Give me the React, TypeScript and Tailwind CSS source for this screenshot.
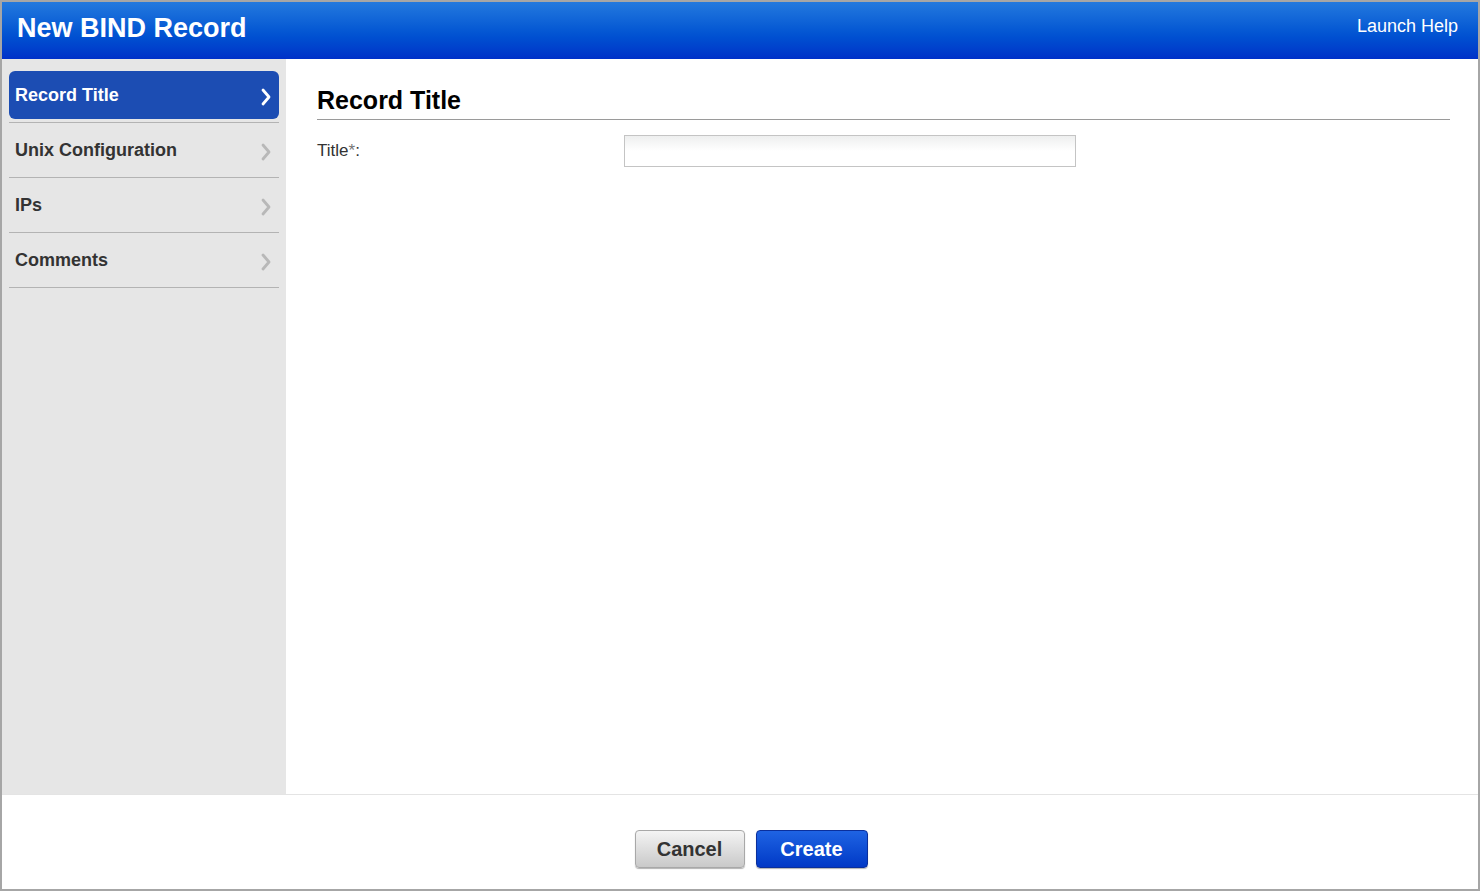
function Chevron({ active }: { active?: boolean }) {
  return (
    <svg width="12" height="20" viewBox="0 0 12 20" className="shrink-0 mt-[3px]">
      <path
        d="M3 3 L9 10 L3 17"
        fill="none"
        stroke={active ? "#ffffff" : "#b8b8b8"}
        strokeWidth="2.8"
        strokeLinecap="round"
        strokeLinejoin="round"
      />
    </svg>
  );
}

const steps = ["Record Title", "Unix Configuration", "IPs", "Comments"];

export default function App() {
  return (
    <div
      className="w-[1480px] h-[891px] flex flex-col border-2 border-[#a6a6a6] bg-white overflow-hidden"
      style={{ fontFamily: '"Liberation Sans", Arial, sans-serif' }}
    >
      <header className="h-[57px] shrink-0 flex items-center justify-between pl-[15px] pr-[20px] bg-gradient-to-b from-[#2379de] to-[#0030c8]">
        <h1 className="text-[27px] font-bold text-white leading-none mb-[4px]">New BIND Record</h1>
        <a href="#" className="text-[18px] text-white leading-none mb-[9px]">
          Launch Help
        </a>
      </header>

      <div className="flex flex-1 min-h-0">
        <nav className="w-[284px] shrink-0 bg-[#e6e6e6] pt-[12px] px-[7px]">
          {steps.map((s, i) =>
            i === 0 ? (
              <div key={s} className="pb-[3px] border-b border-[#b3b3b3]">
                <div className="h-[48px] rounded-[6px] bg-[#1c4db3] flex items-center justify-between pl-[6px] pr-[7px]">
                  <span className="text-[18px] font-bold text-white">{s}</span>
                  <Chevron active />
                </div>
              </div>
            ) : (
              <div
                key={s}
                className="h-[55px] border-b border-[#b3b3b3] flex items-center justify-between pl-[6px] pr-[7px]"
              >
                <span className="text-[18px] font-bold text-[#333333]">{s}</span>
                <Chevron />
              </div>
            )
          )}
        </nav>

        <main className="flex-1 pl-[31px] pr-[28px] pt-[29px]">
          <h2 className="text-[25px] font-bold text-black leading-none pb-[6px] border-b border-[#9a9a9a]">
            Record Title
          </h2>
          <div className="flex items-center mt-[15px]">
            <label className="w-[307px] text-[17px] text-[#333333]">
              Title<span className="text-[#777777]">*</span>:
            </label>
            <input
              type="text"
              className="w-[452px] h-[32px] border border-[#c4c4c4] bg-gradient-to-b from-[#eeefef] via-white to-white outline-none px-2 text-[16px]"
            />
          </div>
        </main>
      </div>

      <footer className="h-[95px] shrink-0 border-t border-[#e4e4e4] flex items-center justify-center gap-[11px] pl-[22px] pt-[14px]">
        <button className="w-[110px] h-[38px] rounded-[4px] border border-[#a8a8a8] bg-gradient-to-b from-[#f4f4f4] to-[#c9c9c9] text-[20px] font-bold text-[#333333] shadow-[0_1px_1px_rgba(0,0,0,0.3)]">
          Cancel
        </button>
        <button className="w-[112px] h-[38px] rounded-[4px] border border-[#0a2f9c] bg-gradient-to-b from-[#1f63e3] to-[#0338c6] text-[20px] font-bold text-white shadow-[0_1px_1px_rgba(0,0,0,0.3)]">
          Create
        </button>
      </footer>
    </div>
  );
}
